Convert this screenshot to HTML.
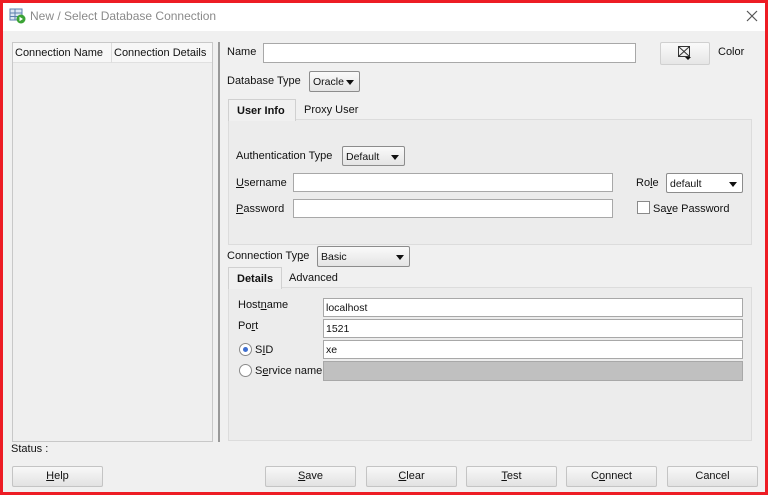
<!DOCTYPE html><html><head><style>
*{box-sizing:border-box;margin:0;padding:0}
body{width:768px;height:495px;background:#ed1c24;font-family:"Liberation Sans",sans-serif;font-size:11px;color:#111;position:relative;overflow:hidden}
.a{position:absolute}
#win{position:absolute;left:3px;top:3px;width:762px;height:489px;background:#f0f0f0}
#title{position:absolute;left:3px;top:3px;width:762px;height:28px;background:#fff}
.inp{position:absolute;background:#fff;border:1px solid #a8a8a8}
.sel{position:absolute;border:1px solid #8c8c8c;border-radius:2px;background:linear-gradient(#fafafa,#e4e4e4);padding:4px 0 0 3px;font-size:10.5px}
.sel:after{content:"";position:absolute;right:5px;top:8px;border-left:4px solid transparent;border-right:4px solid transparent;border-top:5px solid #111}
.btn{position:absolute;top:466px;width:91px;height:21px;border:1px solid #c4c4c4;border-radius:2px;background:linear-gradient(#f8f8f8,#e2e2e2);text-align:center;line-height:19px;font-size:11px}
.tab{position:absolute;border:1px solid #d0d0d0;border-bottom:none;background:#f0f0f0;font-weight:bold;padding:5px 0 0 8px}
.pnl{position:absolute;border:1px solid #dcdcdc;background:#ececec}
.rad{position:absolute;width:13px;height:13px;border:1px solid #8a8a8a;border-radius:50%;background:#fff}
u{text-decoration:underline}
</style></head><body>
<div id="win"></div>
<div id="title"></div>
<svg class="a" style="left:9px;top:8px" width="17" height="16"><rect x="1" y="1" width="12" height="11" fill="#dbe6f3" stroke="#5b7fae"/><line x1="1" y1="5" x2="13" y2="5" stroke="#5b7fae"/><line x1="1" y1="8.5" x2="13" y2="8.5" stroke="#5b7fae"/><line x1="6" y1="1" x2="6" y2="12" stroke="#5b7fae"/><circle cx="12" cy="11" r="4.5" fill="#3aa335"/><path d="M10.5 8.8 L14 11 L10.5 13.2Z" fill="#fff"/></svg>
<div class="a" style="left:30px;top:9px;color:#8a8a8a;font-size:12px">New / Select Database Connection</div>
<svg class="a" style="left:746px;top:10px" width="12" height="12"><path d="M1 1L11 11M11 1L1 11" stroke="#555" stroke-width="1.2"/></svg>

<div class="a" style="left:12px;top:42px;width:201px;height:400px;border:1px solid #c8c8c8;background:#efefef"></div>
<div class="a" style="left:13px;top:43px;width:199px;height:20px;background:#f7f7f7;border-bottom:1px solid #e0e0e0"></div>
<div class="a" style="left:111px;top:43px;width:1px;height:20px;background:#ddd"></div>
<div class="a" style="left:15px;top:47px">Connection Name</div>
<div class="a" style="left:114px;top:47px">Connection Details</div>
<div class="a" style="left:218px;top:42px;width:2px;height:400px;background:#999"></div>

<div class="a" style="left:227px;top:46px">Name</div>
<div class="inp" style="left:263px;top:43px;width:373px;height:20px"></div>
<div class="a" style="left:660px;top:42px;width:50px;height:23px;border:1px solid #d0d0d0;border-radius:2px;background:linear-gradient(#fafafa,#e6e6e6)"></div>
<svg class="a" style="left:677px;top:45px" width="16" height="16"><rect x="1.5" y="1.5" width="11" height="10" fill="none" stroke="#333"/><path d="M1.5 1.5L12.5 11.5M12.5 1.5L1.5 11.5" stroke="#333"/><path d="M8 12L14 12L11 15Z" fill="#111"/></svg>
<div class="a" style="left:718px;top:46px">Color</div>

<div class="a" style="left:227px;top:75px">Database Type</div>
<div class="sel" style="left:309px;top:71px;width:51px;height:21px">Oracle</div>

<div class="pnl" style="left:228px;top:119px;width:524px;height:126px"></div>
<div class="tab" style="left:228px;top:99px;width:68px;height:22px">User Info</div>
<div class="a" style="left:304px;top:104px">Proxy User</div>

<div class="a" style="left:236px;top:150px">Authentication Type</div>
<div class="sel" style="left:342px;top:146px;width:63px;height:20px">Default</div>
<div class="a" style="left:236px;top:177px"><u>U</u>sername</div>
<div class="inp" style="left:293px;top:173px;width:320px;height:19px"></div>
<div class="a" style="left:236px;top:203px"><u>P</u>assword</div>
<div class="inp" style="left:293px;top:199px;width:320px;height:19px"></div>
<div class="a" style="left:636px;top:177px">Ro<u>l</u>e</div>
<div class="sel" style="left:666px;top:173px;width:77px;height:20px;background:#fff">default</div>
<div class="a" style="left:637px;top:201px;width:13px;height:13px;border:1px solid #8a8a8a;background:#fff"></div>
<div class="a" style="left:653px;top:203px">Sa<u>v</u>e Password</div>

<div class="a" style="left:227px;top:250px">Connection Ty<u>p</u>e</div>
<div class="sel" style="left:317px;top:246px;width:93px;height:21px">Basic</div>

<div class="pnl" style="left:228px;top:287px;width:524px;height:154px"></div>
<div class="tab" style="left:228px;top:267px;width:54px;height:22px">Details</div>
<div class="a" style="left:289px;top:272px">Advanced</div>

<div class="a" style="left:238px;top:299px">Host<u>n</u>ame</div>
<div class="inp" style="left:323px;top:298px;width:420px;height:19px;padding:3px 2px;font-size:10.5px">localhost</div>
<div class="a" style="left:238px;top:320px">Po<u>r</u>t</div>
<div class="inp" style="left:323px;top:319px;width:420px;height:19px;padding:3px 2px;font-size:10.5px">1521</div>
<div class="rad" style="left:239px;top:343px"></div><div class="a" style="left:243px;top:347px;width:5px;height:5px;border-radius:50%;background:#3f6fd0"></div>
<div class="a" style="left:255px;top:344px">S<u>I</u>D</div>
<div class="inp" style="left:323px;top:340px;width:420px;height:19px;padding:3px 2px;font-size:10.5px">xe</div>
<div class="rad" style="left:239px;top:364px"></div>
<div class="a" style="left:255px;top:365px">S<u>e</u>rvice name</div>
<div class="a" style="left:323px;top:361px;width:420px;height:20px;background:#c0c0c0;border:1px solid #a8a8a8"></div>

<div class="a" style="left:11px;top:443px">Status :</div>
<div class="btn" style="left:12px"><u>H</u>elp</div>
<div class="btn" style="left:265px"><u>S</u>ave</div>
<div class="btn" style="left:366px"><u>C</u>lear</div>
<div class="btn" style="left:466px"><u>T</u>est</div>
<div class="btn" style="left:566px">C<u>o</u>nnect</div>
<div class="btn" style="left:667px">Cancel</div>
</body></html>
